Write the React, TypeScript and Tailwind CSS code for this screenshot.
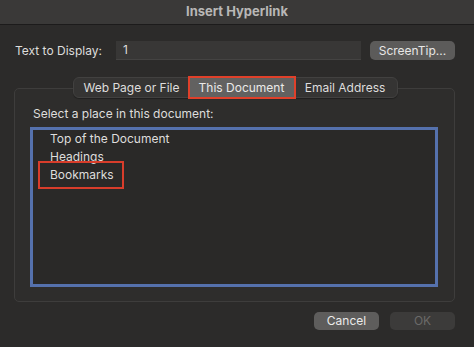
import React from "react";

export default function App() {
  const font = { fontFamily: "Inter, 'Liberation Sans', sans-serif" };
  return (
    <div
      className="w-[474px] h-[347px] bg-[#2c2b2a] flex flex-col text-[12px] text-[#dedddc] overflow-hidden"
      style={font}
    >
      <div className="h-[25px] shrink-0 bg-[#3a3938] border-b border-[#1c1b1b] flex items-center justify-center font-bold text-[13px] text-[#b8b7b6]">
        Insert Hyperlink
      </div>

      <div className="flex items-center mt-[16px] h-[19px]">
        <div className="pl-[15px] w-[116px]">Text to Display:</div>
        <div className="w-[245px] h-[19px] bg-[#383736] border-b border-[#444342] flex items-center pl-[7px]">
          1
        </div>
        <div className="ml-[9px] w-[85px] h-[19px] rounded-[5px] bg-[#5c5b5a] flex items-center justify-center text-[#e8e7e6]">
          ScreenTip...
        </div>
      </div>

      <div className="relative z-10 mt-[17px] flex justify-center">
        <div className="ml-[-4px] flex h-[21px] rounded-[6px] bg-[#353433] border border-[#424140] shadow-[0_1px_1px_rgba(0,0,0,0.3)]">
          <div className="w-[116px] flex items-center justify-center">Web Page or File</div>
          <div className="w-[104px] flex items-center justify-center bg-[#626160] outline-2 outline-[#e0402a] text-[#ebeae9]">
            This Document
          </div>
          <div className="w-[103px] flex items-center justify-center">Email Address</div>
        </div>
      </div>

      <div className="mt-[-10px] ml-[14px] w-[441px] h-[214px] rounded-[5px] border border-[#3e3d3c] bg-[#2e2d2c] flex flex-col">
        <div className="mt-[17px] ml-[18px] leading-[16px]">Select a place in this document:</div>
        <div className="mt-[5px] ml-[15px] w-[408px] h-[160px] border-[3px] border-[#5571ad] bg-[#2a2928] flex flex-col leading-[18px]">
          <div className="pl-[17px] h-[18px]">Top of the Document</div>
          <div className="pl-[17px] h-[18px]">Headings</div>
          <div className="pl-[7px] h-[18px]">
            <span className="inline-block h-[24px] -mt-[3px] w-[82px] pl-[10px] leading-[24px] outline-2 outline-[#d83d2b]">
              Bookmarks
            </span>
          </div>
        </div>
      </div>

      <div className="flex justify-end mt-[10px] mr-[19px] gap-[11px]">
        <div className="w-[65px] h-[18px] rounded-[5px] bg-[#5e5d5c] flex items-center justify-center text-[#ecebea]">
          Cancel
        </div>
        <div className="w-[65px] h-[18px] rounded-[5px] bg-[#3c3b3a] flex items-center justify-center text-[#6b6a69]">
          OK
        </div>
      </div>
    </div>
  );
}
